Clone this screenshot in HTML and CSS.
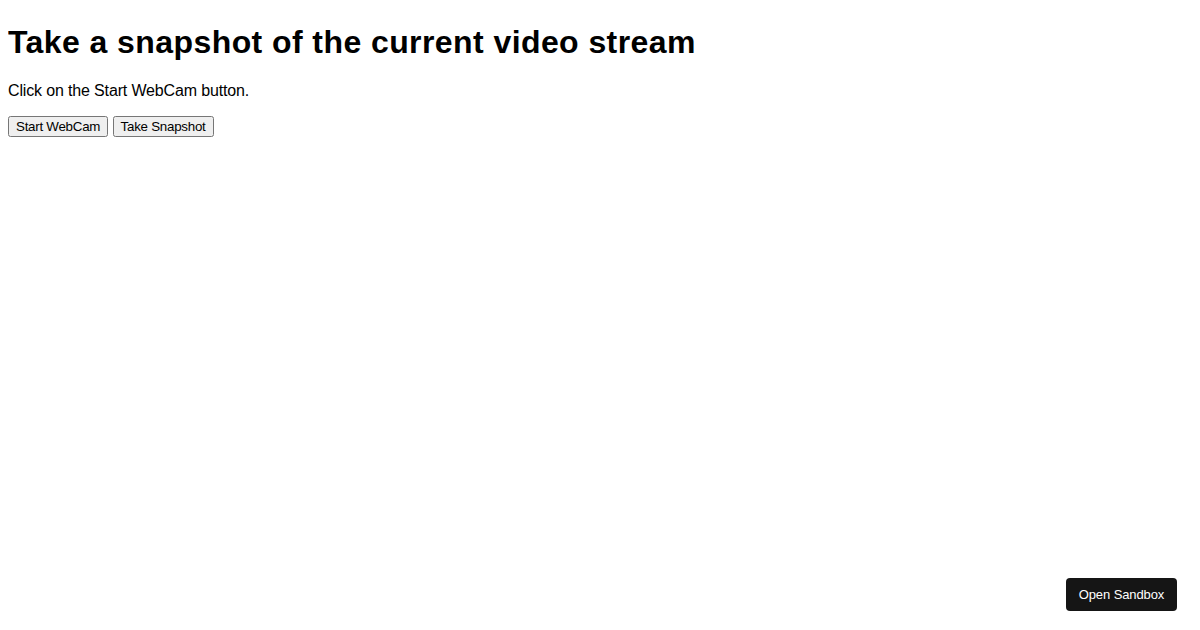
FILE: index.html
```html
<!DOCTYPE html>
<html>
<head>
<meta charset="utf-8">
<link rel="stylesheet" href="styles.css">
</head>
<body>
<h1 class="title">Take a snapshot of the current video stream</h1>
<p class="intro">Click on the Start WebCam button.</p>
<p class="controls">
<button class="btn">Start WebCam</button>
<button class="btn">Take Snapshot</button>
</p>
<a class="sandbox">Open Sandbox</a>
</body>
</html>
```
FILE: styles.css
```css
body {
  margin: 8px;
  font-family: "Liberation Sans", Arial, sans-serif;
  color: #000;
  background: #fff;
}
.title {
  font-size: 32px;
  font-weight: bold;
  letter-spacing: 0.42px;
  margin: 15.5px 0 21.44px;
}
.intro {
  font-size: 16px;
  letter-spacing: -0.15px;
  margin: 16px 0;
}
.controls {
  margin: 16px 0;
  font-size: 16px;
}
.btn {
  font-family: "Liberation Sans", Arial, sans-serif;
  font-size: 13.333px;
  letter-spacing: -0.25px;
}
.sandbox {
  position: fixed;
  right: 23px;
  bottom: 19px;
  width: 111px;
  height: 33px;
  box-sizing: border-box;
  display: flex;
  align-items: center;
  justify-content: center;
  background: #151515;
  color: #fff;
  border-radius: 4px;
  font-size: 13px;
  letter-spacing: -0.1px;
  font-family: "Liberation Sans", Arial, sans-serif;
}
```
